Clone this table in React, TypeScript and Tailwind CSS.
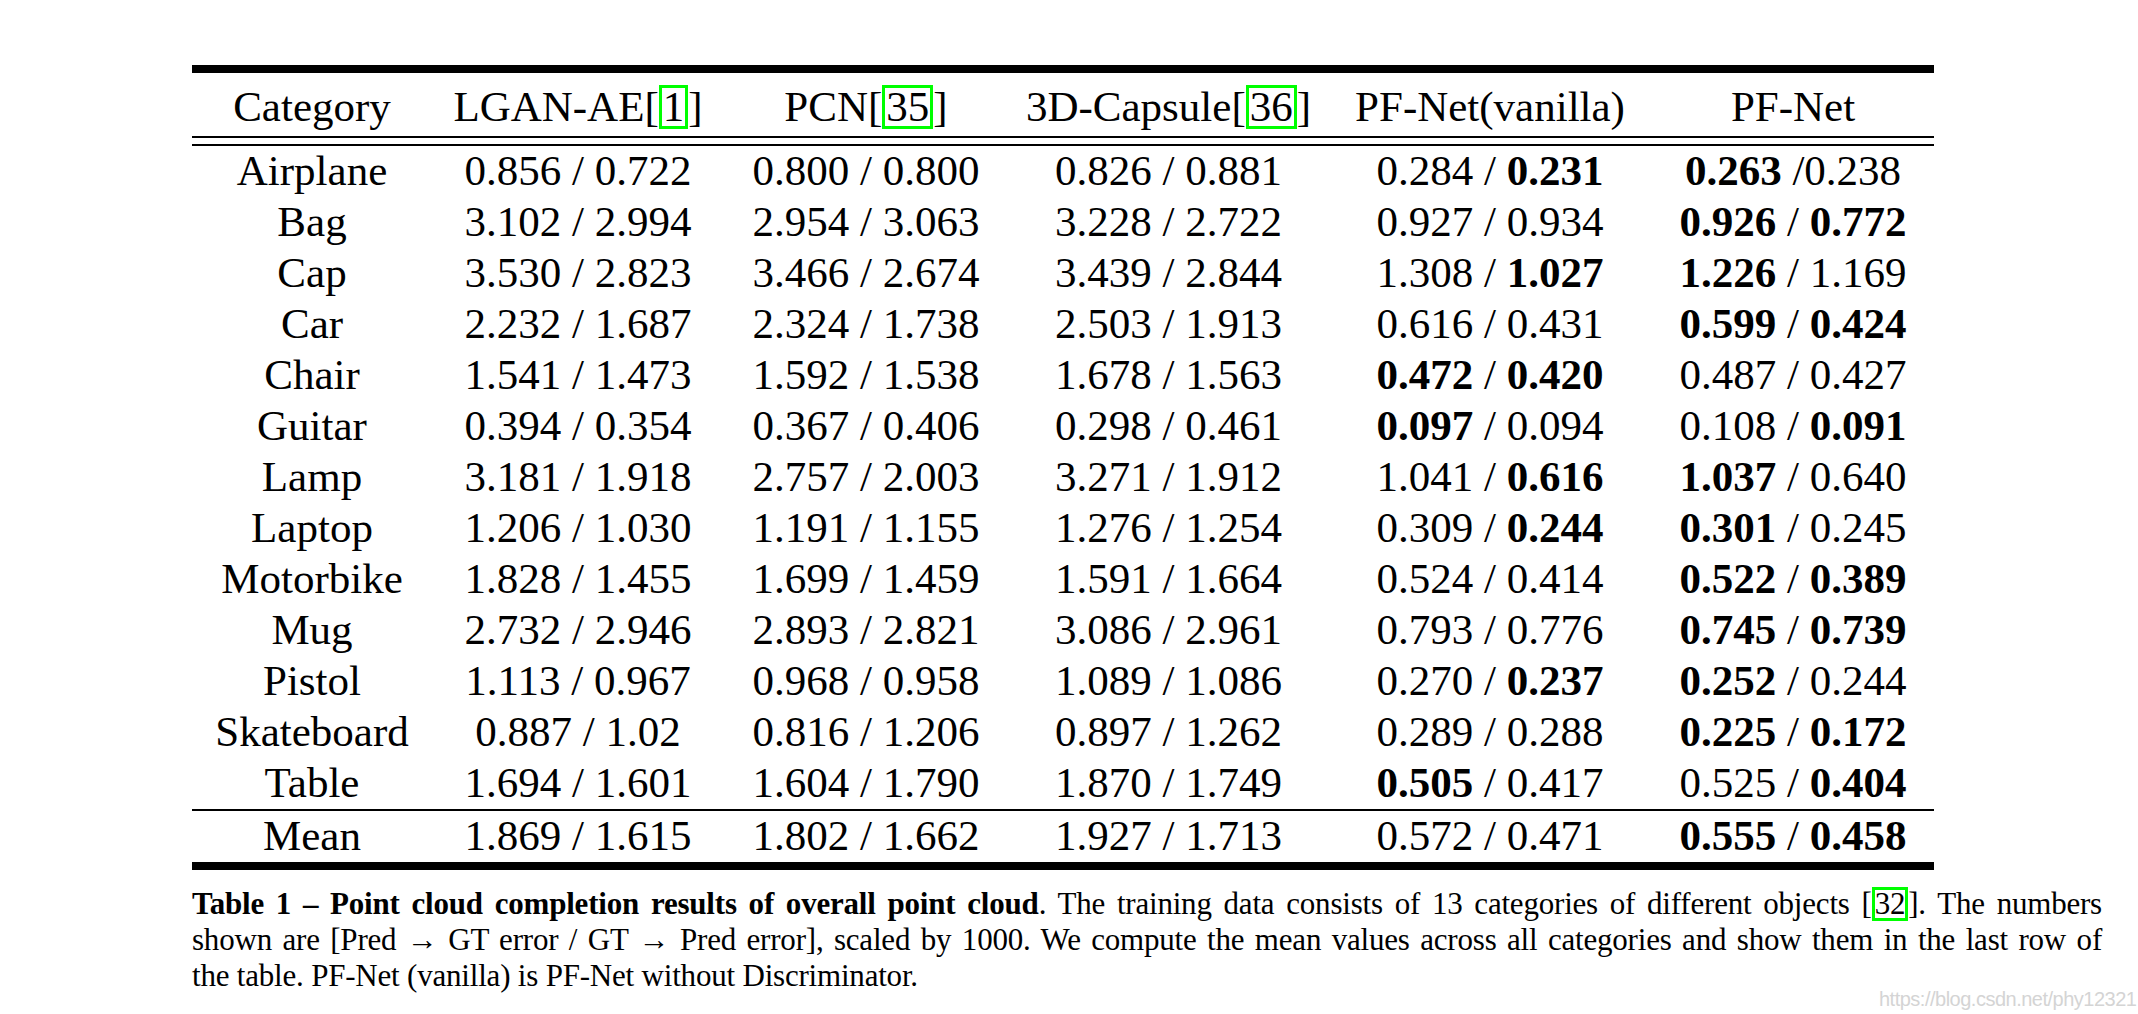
import React from 'react';

type Cell = { a: string; b: string; ba?: boolean; bb?: boolean; tight?: boolean };

const rows: { name: string; cells: Cell[] }[] = [
  { name: 'Airplane', cells: [{ a: '0.856', b: '0.722' }, { a: '0.800', b: '0.800' }, { a: '0.826', b: '0.881' }, { a: '0.284', b: '0.231', bb: true }, { a: '0.263', b: '0.238', ba: true, tight: true }] },
  { name: 'Bag', cells: [{ a: '3.102', b: '2.994' }, { a: '2.954', b: '3.063' }, { a: '3.228', b: '2.722' }, { a: '0.927', b: '0.934' }, { a: '0.926', b: '0.772', ba: true, bb: true }] },
  { name: 'Cap', cells: [{ a: '3.530', b: '2.823' }, { a: '3.466', b: '2.674' }, { a: '3.439', b: '2.844' }, { a: '1.308', b: '1.027', bb: true }, { a: '1.226', b: '1.169', ba: true }] },
  { name: 'Car', cells: [{ a: '2.232', b: '1.687' }, { a: '2.324', b: '1.738' }, { a: '2.503', b: '1.913' }, { a: '0.616', b: '0.431' }, { a: '0.599', b: '0.424', ba: true, bb: true }] },
  { name: 'Chair', cells: [{ a: '1.541', b: '1.473' }, { a: '1.592', b: '1.538' }, { a: '1.678', b: '1.563' }, { a: '0.472', b: '0.420', ba: true, bb: true }, { a: '0.487', b: '0.427' }] },
  { name: 'Guitar', cells: [{ a: '0.394', b: '0.354' }, { a: '0.367', b: '0.406' }, { a: '0.298', b: '0.461' }, { a: '0.097', b: '0.094', ba: true }, { a: '0.108', b: '0.091', bb: true }] },
  { name: 'Lamp', cells: [{ a: '3.181', b: '1.918' }, { a: '2.757', b: '2.003' }, { a: '3.271', b: '1.912' }, { a: '1.041', b: '0.616', bb: true }, { a: '1.037', b: '0.640', ba: true }] },
  { name: 'Laptop', cells: [{ a: '1.206', b: '1.030' }, { a: '1.191', b: '1.155' }, { a: '1.276', b: '1.254' }, { a: '0.309', b: '0.244', bb: true }, { a: '0.301', b: '0.245', ba: true }] },
  { name: 'Motorbike', cells: [{ a: '1.828', b: '1.455' }, { a: '1.699', b: '1.459' }, { a: '1.591', b: '1.664' }, { a: '0.524', b: '0.414' }, { a: '0.522', b: '0.389', ba: true, bb: true }] },
  { name: 'Mug', cells: [{ a: '2.732', b: '2.946' }, { a: '2.893', b: '2.821' }, { a: '3.086', b: '2.961' }, { a: '0.793', b: '0.776' }, { a: '0.745', b: '0.739', ba: true, bb: true }] },
  { name: 'Pistol', cells: [{ a: '1.113', b: '0.967' }, { a: '0.968', b: '0.958' }, { a: '1.089', b: '1.086' }, { a: '0.270', b: '0.237', bb: true }, { a: '0.252', b: '0.244', ba: true }] },
  { name: 'Skateboard', cells: [{ a: '0.887', b: '1.02' }, { a: '0.816', b: '1.206' }, { a: '0.897', b: '1.262' }, { a: '0.289', b: '0.288' }, { a: '0.225', b: '0.172', ba: true, bb: true }] },
  { name: 'Table', cells: [{ a: '1.694', b: '1.601' }, { a: '1.604', b: '1.790' }, { a: '1.870', b: '1.749' }, { a: '0.505', b: '0.417', ba: true }, { a: '0.525', b: '0.404', bb: true }] },
];

const mean: { name: string; cells: Cell[] } = {
  name: 'Mean',
  cells: [{ a: '1.869', b: '1.615' }, { a: '1.802', b: '1.662' }, { a: '1.927', b: '1.713' }, { a: '0.572', b: '0.471' }, { a: '0.555', b: '0.458', ba: true, bb: true }],
};

const cols = 'grid grid-cols-[240px_292px_284px_321px_322px_284px]';

const Cite: React.FC<{ n: string }> = ({ n }) => (
  <>
    [<span className="inline-block border-[3px] border-[#00ff00] leading-[38px] px-[1px]">{n}</span>]
  </>
);

const Value: React.FC<{ c: Cell }> = ({ c }) => (
  <span className="whitespace-pre">
    <span className={c.ba ? 'font-bold' : ''}>{c.a}</span>
    {c.tight ? ' /' : ' / '}
    <span className={c.bb ? 'font-bold' : ''}>{c.b}</span>
  </span>
);

const Row: React.FC<{ r: { name: string; cells: Cell[] } }> = ({ r }) => (
  <div className={`${cols} h-[51px] pb-[17px] items-center text-center`}>
    <div>{r.name}</div>
    {r.cells.map((c, i) => (
      <div key={i}>
        <Value c={c} />
      </div>
    ))}
  </div>
);

export default function App() {
  return (
    <div
      className="relative min-h-screen bg-white text-black"
      style={{ fontFamily: '"Liberation Serif", "Times New Roman", serif' }}
    >
      <div className="pl-[192px] pt-[65px]">
        <div className="w-[1742px] text-[43px] leading-[50px]">
          <div className="h-[8px] bg-black" />
          <div className={`${cols} h-[63px] pt-[5px] items-center text-center`}>
            <div>Category</div>
            <div>LGAN-AE<Cite n="1" /></div>
            <div>PCN<Cite n="35" /></div>
            <div>3D-Capsule<Cite n="36" /></div>
            <div>PF-Net(vanilla)</div>
            <div>PF-Net</div>
          </div>
          <div className="h-[2px] bg-black" />
          <div className="h-[6px]" />
          <div className="h-[2px] bg-black" />
          {rows.map((r) => (
            <Row key={r.name} r={r} />
          ))}
          <div className="h-[2px] bg-black" />
          <Row r={mean} />
          <div className="h-[8px] bg-black" />
        </div>

        <div className="mt-[16px] w-[1910px] text-[31px] leading-[36px] tracking-[-0.2px]">
          <div className="whitespace-nowrap text-justify [text-align-last:justify]">
            <span className="font-bold">Table 1 – Point cloud completion results of overall point cloud</span>.  The training data consists of 13 categories of different objects [<span className="inline-block border-[3px] border-[#00ff00] leading-[28px]">32</span>].  The numbers
          </div>
          <div className="whitespace-nowrap text-justify [text-align-last:justify]">
            shown are [Pred → GT error / GT → Pred error], scaled by 1000.  We compute the mean values across all categories and show them in the last row of
          </div>
          <div>the table. PF-Net (vanilla) is PF-Net without Discriminator.</div>
        </div>
      </div>

      <div
        className="absolute left-[1879px] top-[984px] text-[20px] text-[#d4d4d4] tracking-[-0.5px]"
        style={{ fontFamily: '"Liberation Sans Narrow", "Liberation Sans", Arial, sans-serif' }}
      >
        https://blog.csdn.net/phy12321
      </div>
    </div>
  );
}
